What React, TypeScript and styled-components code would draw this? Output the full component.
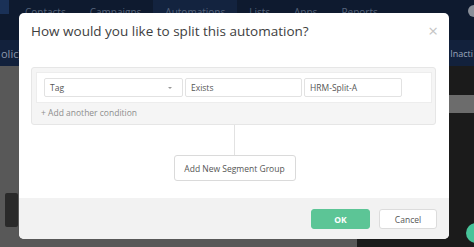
import styled, { createGlobalStyle } from "styled-components";

const GlobalStyle = createGlobalStyle`
  html, body {
    margin: 0;
    padding: 0;
    background: #1b1b1b;
  }
  body {
    font-family: "Open Sans", "Liberation Sans", sans-serif;
  }
`;

const Page = styled.div`
  position: relative;
  width: 474px;
  height: 247px;
  overflow: hidden;
  display: flex;
  flex-direction: column;
  background: #1b1b1b;
`;

const TopNav = styled.div`
  height: 40px;
  display: flex;
  align-items: flex-start;
  background: #0e1a2f;
`;

const LogoTile = styled.div`
  width: 9px;
  height: 14px;
  background: #1a3157;
`;

const NavItem = styled.div<{ $active?: boolean }>`
  height: 100%;
  padding: 5px 12px 0;
  font-size: 10px;
  color: #56647b;
  background: ${(p) => (p.$active ? "#13233f" : "transparent")};
`;

const NavList = styled.div`
  display: flex;
  margin-left: 4px;
  height: 100%;
`;

const Avatar = styled.div`
  margin-left: auto;
  margin-top: 5px;
  margin-right: -6px;
  width: 12px;
  height: 12px;
  border-radius: 50%;
  background: #8a8f99;
`;

const SubBar = styled.div`
  height: 26px;
  display: flex;
  align-items: center;
  justify-content: space-between;
  background: #12213c;
  color: #8c98ad;
  font-size: 11px;
`;

const SubTitle = styled.span`
  margin-left: 1px;
`;

const InactiveTag = styled.span`
  margin-right: 1px;
  font-size: 9px;
  color: #9aa6bb;
`;

const Content = styled.div`
  flex: 1;
  display: flex;
`;

const MainArea = styled.div`
  width: 357px;
  display: flex;
  flex-direction: column;
  background: #585858;
`;

const LeftCard = styled.div`
  margin: 127px 0 0 5px;
  width: 13px;
  height: 34px;
  border-radius: 2px;
  background: #2a2a2a;
`;

const SidePanel = styled.div`
  flex: 1;
  display: flex;
  flex-direction: column;
`;

const SideRow = styled.div`
  margin-top: 29px;
  height: 18px;
  background: #6c6c6c;
`;

const Fab = styled.div`
  position: absolute;
  left: 466px;
  top: 223px;
  width: 20px;
  height: 20px;
  border-radius: 50%;
  background: #48c49a;
`;

const Modal = styled.div`
  position: absolute;
  left: 19px;
  top: 13px;
  width: 430px;
  height: 226px;
  border-radius: 5px;
  background: #fff;
  overflow: hidden;
  display: flex;
  flex-direction: column;
`;

const ModalBody = styled.div`
  position: relative;
  flex: 1;
  padding: 8px 13px 0 12px;
  display: flex;
  flex-direction: column;
`;

const Title = styled.h2`
  margin: 0;
  font-size: 13.5px;
  line-height: 20px;
  font-weight: 400;
  color: #3e3e3e;
`;

const Close = styled.span`
  position: absolute;
  right: 11px;
  top: 9px;
  font-size: 17px;
  line-height: 17px;
  color: #c4c4c4;
`;

const ConditionPanel = styled.div`
  margin-top: 26px;
  height: 58px;
  box-sizing: border-box;
  border: 1px solid #e6e6e6;
  border-radius: 3px;
  background: #f5f5f5;
  padding: 4px 3px 0 4px;
`;

const ConditionRow = styled.div`
  height: 31px;
  box-sizing: border-box;
  border: 1px solid #ededed;
  background: #fff;
  display: flex;
  gap: 2px;
  padding: 5px 0 0 7px;
`;

const Field = styled.div<{ $width: number }>`
  position: relative;
  width: ${(p) => p.$width}px;
  height: 19px;
  box-sizing: border-box;
  border: 1px solid #e2e2e2;
  border-radius: 2px;
  background: #fff;
  padding-left: 5px;
  font-size: 8.5px;
  line-height: 17px;
  color: #555;
`;

const Caret = styled.span`
  position: absolute;
  right: 10px;
  top: 8px;
  border-left: 2px solid transparent;
  border-right: 2px solid transparent;
  border-top: 2px solid #999;
`;

const AddCondition = styled.div`
  padding: 4px 0 0 5px;
  font-size: 8.5px;
  color: #8e8e8e;
`;

const Connector = styled.div`
  align-self: center;
  width: 1px;
  height: 30px;
  background: #e2e2e2;
  margin-left: 2px;
`;

const SegmentButton = styled.button`
  align-self: center;
  margin-left: 2px;
  width: 122px;
  height: 26px;
  border: 1px solid #dadada;
  border-radius: 3px;
  background: #fff;
  font-family: inherit;
  font-size: 8.5px;
  color: #555;
  padding: 0;
`;

const Footer = styled.div`
  height: 41px;
  background: #f2f2f2;
  display: flex;
  justify-content: flex-end;
  align-items: flex-start;
  gap: 9px;
  padding: 11px 12px 0 0;
  box-sizing: border-box;
`;

const FooterButton = styled.button<{ $primary?: boolean }>`
  width: ${(p) => (p.$primary ? 59 : 58)}px;
  height: 20px;
  border-radius: 3px;
  border: 1px solid ${(p) => (p.$primary ? "#5cc596" : "#dcdcdc")};
  background: ${(p) => (p.$primary ? "#5cc596" : "#fff")};
  color: ${(p) => (p.$primary ? "#fff" : "#555")};
  font-family: inherit;
  font-size: 8.5px;
  font-weight: ${(p) => (p.$primary ? 700 : 400)};
  padding: 0;
`;

const navItems = ["Contacts", "Campaigns", "Automations", "Lists", "Apps", "Reports"];

export default function App() {
  return (
    <>
      <GlobalStyle />
      <Page>
        <TopNav>
          <LogoTile />
          <NavList>
            {navItems.map((n) => (
              <NavItem key={n} $active={n === "Automations"}>
                {n}
              </NavItem>
            ))}
          </NavList>
          <Avatar />
        </TopNav>
        <SubBar>
          <SubTitle>olic]</SubTitle>
          <InactiveTag>Inacti</InactiveTag>
        </SubBar>
        <Content>
          <MainArea>
            <LeftCard />
          </MainArea>
          <SidePanel>
            <SideRow />
          </SidePanel>
        </Content>
        <Fab />

        <Modal>
          <ModalBody>
            <Title>How would you like to split this automation?</Title>
            <Close>×</Close>
            <ConditionPanel>
              <ConditionRow>
                <Field $width={139}>
                  Tag
                  <Caret />
                </Field>
                <Field $width={117}>Exists</Field>
                <Field $width={98}>HRM-Split-A</Field>
              </ConditionRow>
              <AddCondition>+ Add another condition</AddCondition>
            </ConditionPanel>
            <Connector />
            <SegmentButton>Add New Segment Group</SegmentButton>
          </ModalBody>
          <Footer>
            <FooterButton $primary>OK</FooterButton>
            <FooterButton>Cancel</FooterButton>
          </Footer>
        </Modal>
      </Page>
    </>
  );
}
